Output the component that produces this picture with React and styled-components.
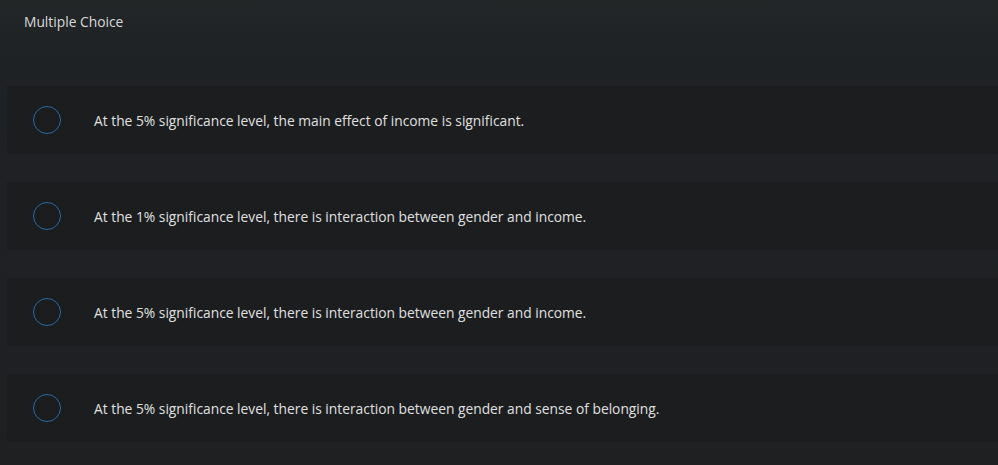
import React from "react";
import styled, { createGlobalStyle } from "styled-components";

const GlobalStyle = createGlobalStyle`
  html, body {
    margin: 0;
    padding: 0;
    background: #1f2123;
  }
  body {
    font-family: "Open Sans", Lato, sans-serif;
  }
`;

const Page = styled.div`
  width: 998px;
  height: 465px;
  overflow: hidden;
  background: linear-gradient(to bottom, #222627 0px, #1f2224 60px, #1e2022 465px);
`;

const Header = styled.header`
  height: 48px;
  padding: 12px 0 0 24px;
  box-sizing: border-box;
  font-size: 13.8px;
  color: #d8dadb;
`;

const List = styled.div`
  display: flex;
  flex-direction: column;
  gap: 28px;
  padding: 38px 0 0 7px;
`;

const Option = styled.label`
  display: flex;
  align-items: center;
  height: 68px;
  background: #1b1d1f;
  cursor: pointer;
`;

const Radio = styled.span`
  width: 26px;
  height: 26px;
  margin-left: 26px;
  border: 1px solid #2b6aa3;
  border-radius: 50%;
  flex-shrink: 0;
`;

const Text = styled.span`
  margin-left: 33px;
  font-size: 13.8px;
  color: #e0e0e0;
`;

const options = [
  "At the 5% significance level, the main effect of income is significant.",
  "At the 1% significance level, there is interaction between gender and income.",
  "At the 5% significance level, there is interaction between gender and income.",
  "At the 5% significance level, there is interaction between gender and sense of belonging.",
];

export default function App() {
  return (
    <Page>
      <GlobalStyle />
      <Header>Multiple Choice</Header>
      <List>
        {options.map((o) => (
          <Option key={o}>
            <Radio />
            <Text>{o}</Text>
          </Option>
        ))}
      </List>
    </Page>
  );
}
